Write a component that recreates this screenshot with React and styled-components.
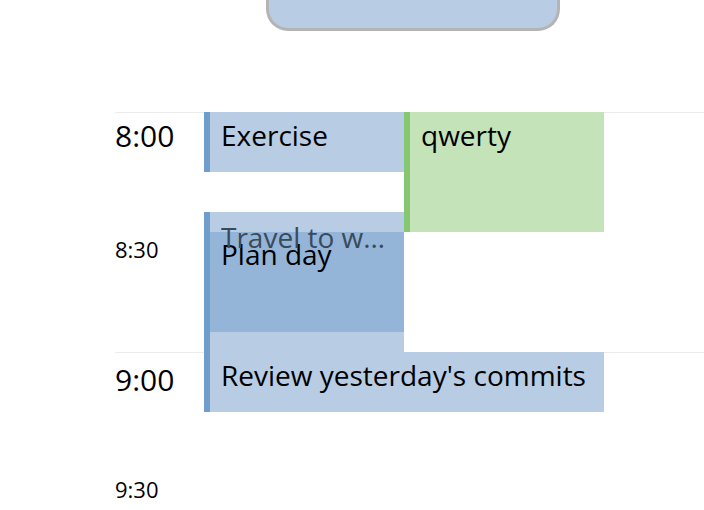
import React from "react";
import styled, { createGlobalStyle } from "styled-components";

const GlobalStyle = createGlobalStyle`
  html, body {
    margin: 0;
    padding: 0;
    background: #ffffff;
    font-family: "Open Sans", "Noto Sans", sans-serif;
    color: #000;
  }
`;

const Page = styled.div`
  height: 100vh;
  overflow: hidden;
  padding-left: 115px;
`;

const Header = styled.div`
  margin-left: 151px;
  width: 294px;
  height: 31px;
  box-sizing: border-box;
  background: #b8cce4;
  border: 3px solid #b4b4b4;
  border-top: none;
  border-radius: 0 0 22px 22px;
`;

const Day = styled.div`
  margin-top: 81px;
  display: grid;
  grid-template-columns: 89px 200px 200px 1fr;
  grid-template-rows: repeat(19, 20px);
`;

const HourLine = styled.div`
  grid-column: 1 / -1;
  grid-row: ${(p) => p.row} / span 1;
  border-top: 1px solid #ececec;
`;

const Label = styled.div`
  grid-column: 1;
  grid-row: ${(p) => p.row} / span 1;
  padding-top: ${(p) => p.offset}px;
  font-size: ${(p) => (p.hour ? 30 : 22)}px;
  line-height: normal;
  white-space: nowrap;
`;

const Event = styled.div`
  grid-column: ${(p) => p.col};
  grid-row: ${(p) => p.row};
  box-sizing: border-box;
  background: ${(p) => p.bg};
  border-left: 6px solid ${(p) => p.accent};
  padding: ${(p) => p.pad}px 10px 0 11px;
  min-width: 0;
  overflow: hidden;
`;

const Overlay = styled.div`
  grid-column: ${(p) => p.col};
  grid-row: ${(p) => p.row};
  z-index: 2;
  background: rgba(111, 158, 204, 0.5);
  padding: ${(p) => p.pad}px 10px 0 17px;
  min-width: 0;
  overflow: hidden;
`;

const Title = styled.div`
  position: relative;
  z-index: 3;
  font-size: 28px;
  line-height: normal;
  white-space: nowrap;
  overflow: hidden;
  text-overflow: ellipsis;
  color: ${(p) => p.color || "#000"};
`;

const blue = { bg: "#b8cce4", accent: "#6f9ecc" };
const green = { bg: "#c5e3b9", accent: "#86c872" };

const labels = [
  { text: "8:00", row: 1, hour: true, offset: 3 },
  { text: "8:30", row: 7, hour: false, offset: 2 },
  { text: "9:00", row: 13, hour: true, offset: 7 },
  { text: "9:30", row: 19, hour: false, offset: 2 },
];

export default function App() {
  return (
    <Page>
      <GlobalStyle />
      <Header />
      <Day>
        <HourLine row={1} />
        <HourLine row={13} />
        {labels.map((l) => (
          <Label key={l.text} row={l.row} hour={l.hour} offset={l.offset}>
            {l.text}
          </Label>
        ))}
        <Event col="2" row="1 / span 3" pad={4} {...blue}>
          <Title>Exercise</Title>
        </Event>
        <Event col="3" row="1 / span 6" pad={4} {...green}>
          <Title>qwerty</Title>
        </Event>
        <Event col="2" row="6 / span 7" pad={6} {...blue}>
          <Title color="#3b4a5a">Travel to work</Title>
        </Event>
        <Overlay col="2" row="7 / span 5" pad={3}>
          <Title>Plan day</Title>
        </Overlay>
        <Event col="2 / span 2" row="13 / span 3" pad={4} {...blue}>
          <Title>Review yesterday's commits</Title>
        </Event>
      </Day>
    </Page>
  );
}
